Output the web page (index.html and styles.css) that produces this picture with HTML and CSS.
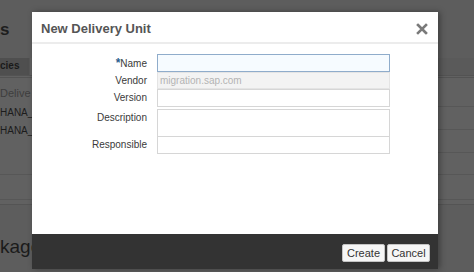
FILE: index.html
```html
<!DOCTYPE html>
<html>
<head>
<meta charset="utf-8">
<link rel="stylesheet" href="styles.css">
</head>
<body>
<div class="page">
  <div class="page-title">s</div>
  <div class="table">
    <div class="tab-cell"><span class="tab">cies</span></div>
    <div class="head-rest"></div>
    <div class="dbl"></div>
    <div class="cell c-row1"><span class="link">Delive</span></div>
    <div class="rcell r-row1"></div>
    <div class="cell c-row2"><span class="txt">HANA_</span></div>
    <div class="rcell r-row2"></div>
    <div class="cell c-row3"><span class="txt up">HANA_</span></div>
    <div class="rcell r-row3"></div>
    <div class="full f1"></div>
    <div class="full f2"></div>
    <div class="full f3"></div>
  </div>
  <div class="page-sub">kage</div>
</div>

<div class="dialog">
  <div class="dlg-head">
    <span class="dlg-title">New Delivery Unit</span>
    <svg class="close" width="12" height="12" viewBox="0 0 12 12"><path d="M2 2 L10 10 M10 2 L2 10" stroke="#7a7a7a" stroke-width="2.6" stroke-linecap="square"/></svg>
  </div>
  <div class="dlg-body">
    <div class="form">
      <label class="lbl"><span class="req">*</span>Name</label>
      <div class="inp inp-focus"></div>
      <label class="lbl">Vendor</label>
      <div class="inp inp-dis">migration.sap.com</div>
      <label class="lbl">Version</label>
      <div class="inp"></div>
      <label class="lbl lbl-top gap">Description</label>
      <div class="inp inp-area gap"></div>
      <label class="lbl gap">Responsible</label>
      <div class="inp gap"></div>
    </div>
  </div>
  <div class="dlg-foot">
    <button class="btn">Create</button>
    <button class="btn">Cancel</button>
  </div>
</div>
</body>
</html>
```
FILE: styles.css
```css
html, body {
  margin: 0;
  padding: 0;
}
body {
  width: 474px;
  height: 272px;
  overflow: hidden;
  background: #5d5d5d;
  font-family: "Liberation Sans", Arial, sans-serif;
  position: relative;
}
.page {
  display: flex;
  flex-direction: column;
}
.page-title {
  height: 58px;
  box-sizing: border-box;
  padding-top: 21px;
  font-size: 17px;
  font-weight: bold;
  line-height: 18px;
  color: #1e1e1e;
}
.table {
  display: grid;
  grid-template-columns: 100px 1fr;
  grid-template-rows: 17px 3px 29px 23px 23px 22px 25px 5px;
  background: #616161;
}
.tab-cell {
  grid-column: 1;
  grid-row: 1;
  display: flex;
}
.tab {
  width: 29px;
  background: #4f4f4f;
  border-right: 1px solid #575757;
  font-size: 10px;
  font-weight: bold;
  color: #1a1a1a;
  line-height: 16px;
}
.head-rest {
  grid-column: 2;
  grid-row: 1;
  background: #5a5a5a;
}
.dbl {
  grid-column: 1 / 3;
  grid-row: 2;
  border-top: 1px solid #535353;
  border-bottom: 1px solid #535353;
}
.cell {
  grid-column: 1;
  font-size: 10px;
  line-height: 12px;
}
.c-row1 { grid-row: 3; display: flex; align-items: center; }
.c-row2 { grid-row: 4; }
.c-row3 { grid-row: 5; }
.rcell {
  grid-column: 2;
  border-bottom: 1px solid #575757;
}
.r-row1 { grid-row: 3; }
.r-row2 { grid-row: 4; }
.r-row3 { grid-row: 5; }
.link {
  color: #3e3e3e;
  font-size: 11px;
}
.txt {
  color: #1c1c1c;
  display: block;
  margin-top: 0px;
}
.txt.up { margin-top: -5px; }
.full {
  grid-column: 1 / 3;
  border-bottom: 1px solid #575757;
}
.f1 { grid-row: 6; }
.f2 { grid-row: 7; }
.f3 { grid-row: 8; border-bottom: 1px solid #545454; }
.page-sub {
  margin-top: 32px;
  font-size: 19px;
  line-height: 20px;
  color: #1b1b1b;
}

.dialog {
  position: absolute;
  left: 32px;
  top: 12px;
  width: 406px;
  height: 257px;
  background: #fff;
  display: flex;
  flex-direction: column;
  box-shadow: 2px 0 6px rgba(0, 0, 0, 0.35);
}
.dlg-head {
  height: 30px;
  border-bottom: 2px solid #ececec;
  display: flex;
  align-items: center;
  justify-content: space-between;
  padding: 0 10px 0 9px;
}
.dlg-title {
  font-size: 13px;
  font-weight: bold;
  color: #555;
  padding-top: 2px;
}
.close {
  display: block;
  margin-top: 4px;
}
.dlg-body {
  flex: 1;
  padding-top: 10px;
}
.form {
  display: grid;
  grid-template-columns: 115px 233px;
  grid-template-rows: 18px 17px 18px 28px 18px;
  column-gap: 10px;
  align-items: center;
}
.lbl {
  font-size: 10px;
  color: #3a3a3a;
  text-align: right;
  line-height: 12px;
}
.lbl-top {
  align-self: start;
  padding-top: 3px;
}
.req {
  color: #2a5f8f;
  font-weight: bold;
  font-size: 12px;
}
.gap { margin-top: 2px; }
.inp {
  box-sizing: border-box;
  height: 18px;
  border: 1px solid #d6d6d6;
  background: #fff;
}
.inp-focus {
  border-color: #8faccb;
  background: #f6fbff;
}
.inp-dis {
  height: 17px;
  background: #f3f3f3;
  border-color: #e4e4e4;
  color: #b3b3b3;
  font-size: 10px;
  line-height: 15px;
  padding-left: 2px;
}
.inp-area {
  height: 28px;
  align-self: start;
}
.dlg-foot {
  height: 35px;
  box-sizing: border-box;
  background: #333;
  display: flex;
  justify-content: flex-end;
  align-items: flex-start;
  gap: 2px;
  padding: 10px 8px 0 0;
}
.btn {
  width: 43px;
  height: 18px;
  padding: 0;
  border: 1px solid #c4c4c4;
  border-radius: 2px;
  background: #f6f6f6;
  font-family: "Liberation Sans", Arial, sans-serif;
  font-size: 11px;
  color: #333;
  line-height: 16px;
}
```
